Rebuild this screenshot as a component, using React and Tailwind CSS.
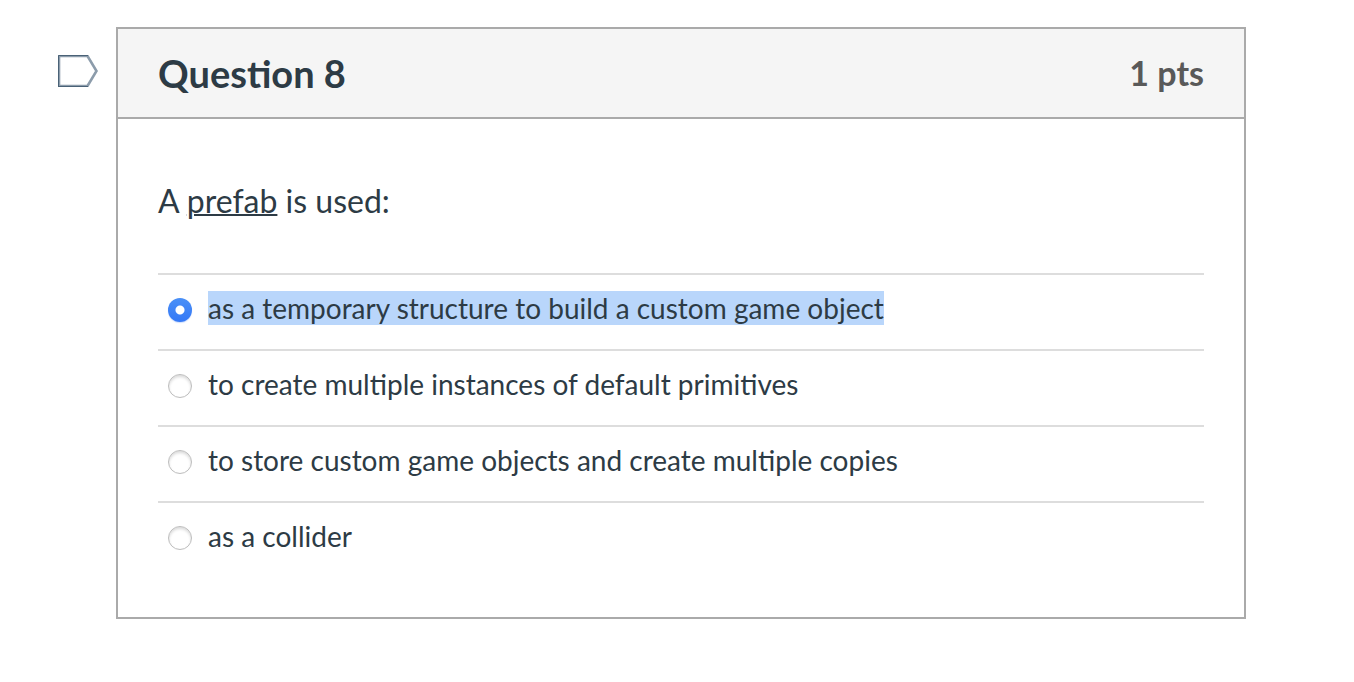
import React, { useState } from "react";

const App = () => {
  return (
    <main className="flex items-start gap-[18px] bg-white pt-[27px] pr-[108px] pb-16 pl-[58px] font-['Lato',sans-serif] text-[#2d3b45]">
      <FlagButton />
      <Question question={question} />
    </main>
  );
};

const FlagButton = () => {
  return (
    <button type="button" aria-label="Flag question" className="mt-7 shrink-0">
      <svg width="40" height="32" viewBox="0 0 40 32" fill="none">
        <path
          d="M1 1H29.5L38.5 16L29.5 31H1Z"
          stroke="#8c9cab"
          strokeWidth="2.6"
        />
        <path d="M0.5 32V0.5H30M0.5 31.5H30" stroke="#4a6277" />
      </svg>
    </button>
  );
};

const Question = ({ question }) => {
  const [selected, setSelected] = useState(question.selected);

  return (
    <section className="min-w-0 flex-1 border-2 border-[#aaaaaa]">
      <header className="flex items-center justify-between border-b-2 border-[#aaaaaa] bg-[#f5f5f5] px-10 py-5 leading-12 font-bold">
        <h2 className="text-[38px]">{question.title}</h2>
        <span className="text-[34px] text-[#595959]">
          {question.points} pts
        </span>
      </header>
      <div className="px-10 pt-[58px] pb-10">
        <p className="pb-12 text-[32px] leading-12">
          A <u className="decoration-2">prefab</u> is used:
        </p>
        <fieldset>
          {question.answers.map((answer) => (
            <Answer
              answer={answer}
              key={answer.id}
              checked={selected === answer.id}
              onChange={() => setSelected(answer.id)}
            />
          ))}
        </fieldset>
      </div>
    </section>
  );
};

const Answer = ({ answer, checked, onChange }) => {
  return (
    <div className="flex items-center gap-4 border-t-2 border-[#dddddd] px-[10px] pt-4 pb-6">
      <input
        type="radio"
        name="answer"
        id={`answer-${answer.id}`}
        checked={checked}
        onChange={onChange}
        className="mt-1 size-6 shrink-0 appearance-none rounded-full border border-[#bdbdbd] bg-white shadow-[inset_0_2px_3px_#00000026] checked:border-0 checked:bg-[radial-gradient(circle,#ffffff_4px,transparent_5px),linear-gradient(#4a90f7,#3478f6)] checked:shadow-[0_1px_1px_#3478f640]"
      />
      <label htmlFor={`answer-${answer.id}`} className="text-[28px] leading-[34px]">
        <span className={checked ? "bg-[#b9d6fb]" : ""}>{answer.text}</span>
      </label>
    </div>
  );
};

const question = {
  title: "Question 8",
  points: 1,
  selected: 1,
  answers: [
    { id: 1, text: "as a temporary structure to build a custom game object" },
    { id: 2, text: "to create multiple instances of default primitives" },
    { id: 3, text: "to store custom game objects and create multiple copies" },
    { id: 4, text: "as a collider" },
  ],
};

export default App;
